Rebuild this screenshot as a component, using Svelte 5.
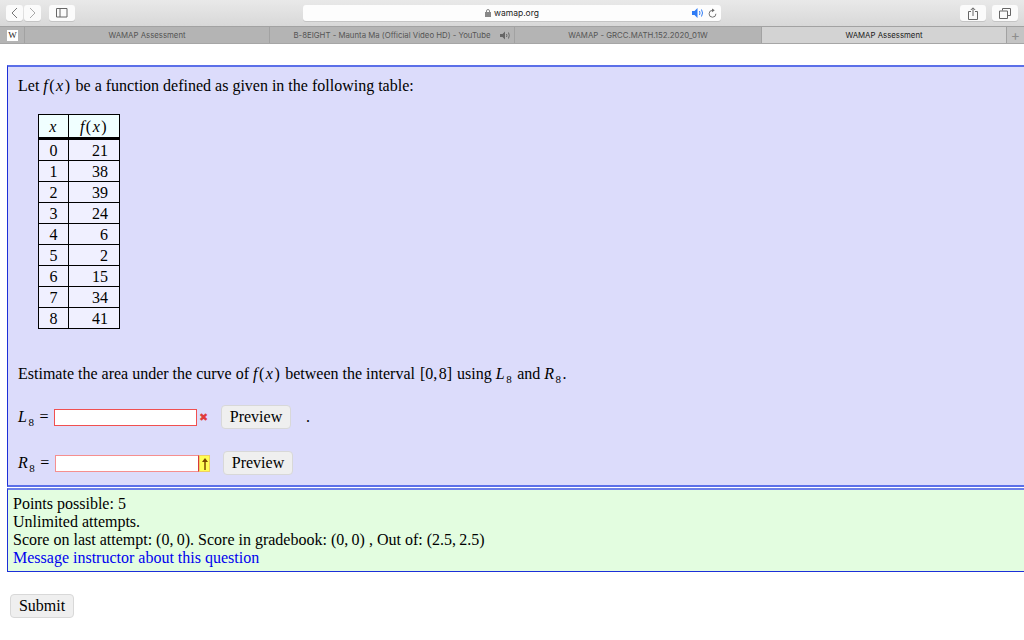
<script>
	const rows = [
		[0, 21],
		[1, 38],
		[2, 39],
		[3, 24],
		[4, 6],
		[5, 2],
		[6, 15],
		[7, 34],
		[8, 41]
	];
	const tabs = [
		{ title: 'WAMAP Assessment' },
		{ title: 'B-8EIGHT - Maunta Ma (Official Video HD) - YouTube', sound: true },
		{ title: 'WAMAP - GRCC.MATH.152.2020_01W' },
		{ title: 'WAMAP Assessment', active: true }
	];
</script>

<div class="toolbar">
	<div class="btn nav-btn">
		<svg width="17" height="16" viewBox="0 0 17 16"><path d="M11 3l-5 5 5 5" fill="none" stroke="#777" stroke-width="1" /></svg>
	</div>
	<div class="btn nav-btn">
		<svg width="17" height="16" viewBox="0 0 17 16"><path d="M6 3l5 5-5 5" fill="none" stroke="#aaa" stroke-width="1" /></svg>
	</div>
	<div class="btn side-btn">
		<svg width="12" height="10" viewBox="0 0 12 10"><path d="M.5.5h10.500v8.500h-10.500zM4 .5v8.500" fill="none" stroke="#666" /></svg>
	</div>
	<div class="address">
		<svg class="lock" width="6" height="8" viewBox="0 0 6 8"><path d="M1.500 3.500v-1.500a1.500 1.500 0 0 1 3 0v1.500" fill="none" stroke="#888" /><rect y="3" width="6" height="5" fill="#888" /></svg>
		<span>wamap.org</span>
		<div class="addr-icons">
			<svg width="12" height="10" viewBox="0 0 12 10"><path d="M0 3h2.500l3-3v10l-3-3h-2.500z" fill="#2f7cf6" /><path d="M7.500 3q1 2 0 4M9.500 1.500q2 3.500 0 7" fill="none" stroke="#2f7cf6" /></svg>
			<svg width="9" height="11" viewBox="0 0 10 11"><path d="M5 2a3.800 3.800 0 1 0 3.800 3.800" fill="none" stroke="#666" /><path d="M4.500 0l3 2-3 2z" fill="#666" /></svg>
		</div>
	</div>
	<div class="btn right-btn">
		<svg width="10" height="13" viewBox="0 0 10 13"><path d="M3 4.500h-2.500v8h9v-8h-2.500M5 9v-8M2.800 3l2.200-2.200 2.200 2.200" fill="none" stroke="#666" /></svg>
	</div>
	<div class="btn right-btn">
		<svg width="12" height="11" viewBox="0 0 12 11"><path d="M3.500 2.500v-2h8v7h-2.500M.5 3h8v7.500h-8z" fill="none" stroke="#666" /></svg>
	</div>
</div>

<div class="tabbar">
	<div class="favicon"><span>W</span></div>
	{#each tabs as tab, i}
		<div class="tab" class:active={tab.active} class:wide={i === 2}>
			<span>{tab.title}</span>
			{#if tab.sound}
				<svg class="tab-sound" width="12" height="9" viewBox="0 0 12 9"><path d="M0 3h2.500l2.500-2.500v8l-2.500-2.500h-2.500z" fill="#666" /><path d="M6.500 3q.8 1.500 0 3M8.500 1.500q1.500 3 0 6" fill="none" stroke="#666" /></svg>
			{/if}
		</div>
	{/each}
	<div class="new-tab">+</div>
</div>

<main class="page">
	<section class="question">
		<p class="intro">Let <span class="math"><i>f</i>(<i>x</i>)</span> be a function defined as given in the following table:</p>

		<table>
			<thead>
				<tr>
					<th><span class="math"><i>x</i></span></th>
					<th><span class="math"><i>f</i>(<i>x</i>)</span></th>
				</tr>
			</thead>
			<tbody>
				{#each rows as [x, y]}
					<tr>
						<td class="x">{x}</td>
						<td class="y">{y}</td>
					</tr>
				{/each}
			</tbody>
		</table>

		<p class="estimate">
			Estimate the area under the curve of <span class="math"><i>f</i>(<i>x</i>)</span> between the interval
			<span class="interval">[0, 8]</span> using
			<span class="math"><i>L</i><sub>8</sub></span> and <span class="math"><i>R</i><sub>8</sub></span>.
		</p>

		<div class="answer first">
			<span class="label"><span class="math"><i>L</i><sub>8</sub></span> =</span>
			<input type="text" class="field" />
			<span class="cross">✖</span>
			<button type="button">Preview</button>
			<span class="dot">.</span>
		</div>

		<div class="answer second">
			<span class="label"><span class="math"><i>R</i><sub>8</sub></span> =</span>
			<input type="text" class="field" />
			<span class="hint">
				<svg width="8" height="13" viewBox="0 0 8 13"><path d="M4 13v-10" stroke="#7a4a00" stroke-width="1.500" /><path d="M1 5l3-4 3 4z" fill="#7a4a00" /></svg>
			</span>
			<button type="button">Preview</button>
		</div>
	</section>

	<section class="info">
		<div>Points possible: 5</div>
		<div>Unlimited attempts.</div>
		<div>
			Score on last attempt: <span class="pair">(0, 0)</span>. Score in gradebook: <span class="pair">(0, 0)</span> , Out of:
			<span class="pair">(2.5, 2.5)</span>
		</div>
		<div><a href="#message">Message instructor about this question</a></div>
	</section>

	<button type="button" class="submit">Submit</button>
</main>

<style>
	:global(body) {
		background: #fff;
		font-family: 'Liberation Serif', 'Times New Roman', serif;
		color: #000;
	}

	.toolbar {
		height: 26px;
		box-sizing: border-box;
		display: flex;
		align-items: flex-start;
		padding: 5px 0 0 6px;
		background: linear-gradient(#e9e9e9, #d8d8d8);
	}

	.btn {
		height: 16px;
		display: flex;
		align-items: center;
		justify-content: center;
		background: #fbfbfb;
		border-radius: 3px;
		box-shadow: 0 1px 0 #c4c4c4;
	}

	.nav-btn {
		width: 17px;
		margin-right: 1px;
	}

	.side-btn {
		width: 26px;
		margin-left: 7px;
	}

	.address {
		width: 418px;
		height: 16px;
		margin: 0 239px 0 228px;
		flex: none;
		position: relative;
		display: flex;
		align-items: center;
		justify-content: center;
		gap: 3px;
		background: #fdfdfd;
		border-radius: 3px;
		box-shadow: 0 1px 0 #c4c4c4;
		font: 8.500px Inter, 'Liberation Sans', sans-serif;
		color: #222;
	}

	.addr-icons {
		position: absolute;
		right: 4px;
		top: 3px;
		display: flex;
		gap: 4px;
	}

	.right-btn {
		width: 26px;
		margin-right: 6px;
	}

	.tabbar {
		height: 18px;
		display: flex;
		background: #b4b4b4;
		border-top: 1px solid #a2a2a2;
		border-bottom: 1px solid #a6a6a6;
		box-sizing: border-box;
		font: 7.800px Inter, 'Liberation Sans', sans-serif;
		color: #555;
	}

	.favicon {
		width: 25px;
		flex: none;
		border-right: 1px solid #a2a2a2;
		box-sizing: border-box;
		padding: 3px 0 0 7px;
	}

	.favicon span {
		display: block;
		width: 11px;
		height: 11px;
		background: #fff;
		color: #222;
		font: 9px/11px 'Liberation Serif', serif;
		text-align: center;
	}

	.tab {
		width: 245px;
		flex: none;
		position: relative;
		display: flex;
		align-items: center;
		justify-content: center;
		border-right: 1px solid #a2a2a2;
		box-sizing: border-box;
	}

	.tab.wide {
		width: 247px;
	}

	.tab.active {
		background: #d3d3d3;
		color: #222;
	}

	.tab-sound {
		position: absolute;
		right: 2px;
		top: 4px;
	}

	.new-tab {
		flex: 1;
		text-align: center;
		font-size: 14px;
		line-height: 15px;
		color: #8d8d8d;
		background: #c4c4c4;
	}

	.page {
		padding: 21px 0 0 7px;
	}

	.question {
		height: 422px;
		box-sizing: border-box;
		padding: 10px 10px 0;
		background: #dcdcfb;
		border-top: 2px solid #5b6fe8;
		border-left: 1px solid #1c2fd8;
		border-bottom: 2px solid #5b6fe8;
		font-size: 16px;
	}

	p {
		margin: 0;
		line-height: 18px;
	}

	/* mathjax glyphs run wider than plain times */
	.math {
		letter-spacing: 1.500px;
	}

	.interval {
		word-spacing: -2.500px;
		margin: 0 1px;
	}

	.pair {
		word-spacing: -0.700px;
	}

	table {
		margin: 19px 0 0 20px;
		border-collapse: collapse;
		font-size: 16px;
	}

	th,
	td {
		border: 1px solid #000;
		padding: 1px 0 0;
		height: 19px;
		line-height: 18px;
		background: #f0f0ff;
	}

	th {
		height: 21px;
		background: #f0ffff;
		font-weight: normal;
		text-align: center;
		border-bottom: 3px solid #000;
	}

	.x {
		width: 29px;
		text-align: center;
	}

	.y {
		width: 51px;
		text-align: right;
		padding-right: 11px;
		box-sizing: border-box;
	}

	.estimate {
		margin-top: 36px;
	}

	sub {
		font-size: 11px;
		line-height: 0;
	}

	.answer {
		display: flex;
		align-items: center;
		height: 26px;
	}

	.first {
		margin-top: 21px;
	}

	.second {
		margin-top: 20px;
	}

	.label {
		width: 36px;
		flex: none;
	}

	.second .label {
		width: 37px;
	}

	.field {
		width: 143px;
		height: 17px;
		box-sizing: border-box;
		margin: 0;
		padding: 0;
		background: #fff;
		border: 1px solid #f05050;
		outline: none;
	}

	.second .field {
		width: 144px;
		border-color: #f58f8f;
		border-right-color: #d83a3a;
	}

	.cross {
		width: 24px;
		flex: none;
		padding-left: 2px;
		box-sizing: border-box;
		font-size: 11px;
		color: #e03c3c;
	}

	.hint {
		width: 11px;
		height: 17px;
		flex: none;
		margin-right: 13px;
		display: flex;
		align-items: center;
		justify-content: center;
		background: #ffff55;
		box-sizing: border-box;
		border: 1px solid #f0cf60;
	}

	button {
		height: 24px;
		width: 70px;
		margin: 0;
		padding: 0;
		font: 16px 'Liberation Serif', serif;
		color: #000;
		background: #efefef;
		border: 1px solid #d8d8d8;
		border-radius: 4px;
	}

	.dot {
		margin-left: 15px;
	}

	.info {
		margin-top: 1px;
		height: 84px;
		box-sizing: border-box;
		padding: 5px 5px 0;
		background: #e3fde0;
		border-top: 2px solid #6c80e8;
		border-left: 1px solid #1c2fd8;
		border-bottom: 1px solid #1c2fd8;
		font-size: 16px;
		line-height: 18px;
	}

	a {
		color: #0000ee;
		text-decoration: none;
	}

	.submit {
		display: block;
		margin: 22px 0 0 3px;
		width: 64px;
	}
</style>
